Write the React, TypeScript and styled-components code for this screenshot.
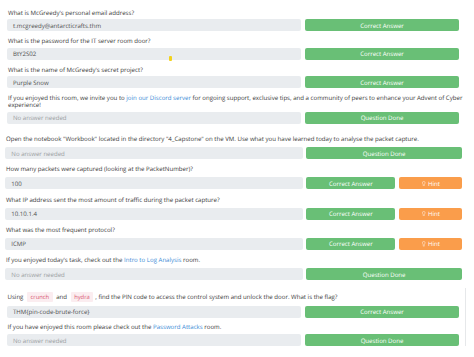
import React from 'react';
import styled, { createGlobalStyle } from 'styled-components';
import { Lightbulb } from 'lucide-react';

const Global = createGlobalStyle`
  html, body { margin: 0; padding: 0; background: #ffffff; }
  body {
    width: 474px;
    height: 357px;
    overflow: hidden;
    font-family: "Open Sans", "Liberation Sans", sans-serif;
    text-rendering: geometricPrecision;
  }
`;

const Page = styled.main`
  display: flex;
  flex-direction: column;
`;

const Section = styled.section<{ $top: number; $left: number; $width: number; $gap: number; $padTop?: number; $bordered?: boolean }>`
  display: flex;
  flex-direction: column;
  gap: ${p => p.$gap}px;
  margin-top: ${p => p.$top}px;
  padding-left: ${p => p.$left}px;
  padding-top: ${p => p.$padTop ?? 0}px;
  width: ${p => p.$width}px;
  ${p => p.$bordered ? 'padding-right: 6px; border-right: 1px solid #e6e8ea;' : ''}
`;

const Question = styled.div<{ $labelGap: number }>`
  display: flex;
  flex-direction: column;
  gap: ${p => p.$labelGap}px;
`;

const Label = styled.div<{ $indent: number }>`
  padding-left: ${p => p.$indent}px;
  font-size: 6.1px;
  line-height: 7px;
  color: #3a3a3a;
  white-space: nowrap;
`;

const Link = styled.span`
  color: #3a8bd6;
`;

const Code = styled.span`
  background: #fbedf0;
  color: #d8546f;
  padding: 1px 3.5px;
  border-radius: 1px;
  margin: 0 2px;
  font-size: 5.8px;
`;

const Row = styled.div<{ $gap: number }>`
  display: flex;
  gap: ${p => p.$gap}px;
  height: 12px;
`;

const AnswerBox = styled.div<{ $muted?: boolean }>`
  position: relative;
  flex: 1;
  display: flex;
  align-items: center;
  padding-left: 6px;
  background: #e9ecef;
  border-radius: 2px;
  font-size: 6.1px;
  color: ${p => (p.$muted ? '#9b9ea2' : '#505050')};
`;

const Caret = styled.span`
  position: absolute;
  left: 162px;
  top: 8px;
  width: 2.5px;
  height: 5px;
  background: #f2d21c;
  border-radius: 1px;
`;

const Actions = styled.div<{ $w: number; $gap: number }>`
  width: ${p => p.$w}px;
  display: flex;
  gap: ${p => p.$gap}px;
`;

const Button = styled.div<{ $tone: 'green' | 'orange'; $w?: number }>`
  ${p => (p.$w ? `width: ${p.$w}px;` : 'flex: 1;')}
  display: flex;
  align-items: center;
  justify-content: center;
  gap: 1px;
  background: ${p => (p.$tone === 'green' ? '#69bf76' : '#fa9d4b')};
  color: #ffffff;
  font-size: 6.1px;
  font-weight: 500;
  border-radius: 2px;
`;

type Item = {
  label: React.ReactNode;
  answer: string;
  muted?: boolean;
  action: 'correct' | 'done' | 'correct-hint';
  caret?: boolean;
};

const sectionA: Item[] = [
  { label: "What is McGreedy's personal email address?", answer: 't.mcgreedy@antarcticrafts.thm', action: 'correct' },
  { label: 'What is the password for the IT server room door?', answer: 'BtY2S02', action: 'correct', caret: true },
  { label: "What is the name of McGreedy's secret project?", answer: 'Purple Snow', action: 'correct' },
  {
    label: (
      <>
        If you enjoyed this room, we invite you to <Link>join our Discord server</Link> for ongoing support, exclusive tips, and a community of peers to enhance your Advent of Cyber
        <br />
        experience!
      </>
    ),
    answer: 'No answer needed',
    muted: true,
    action: 'done',
  },
];

const sectionB: Item[] = [
  {
    label: 'Open the notebook "Workbook" located in the directory "4_Capstone" on the VM. Use what you have learned today to analyse the packet capture.',
    answer: 'No answer needed',
    muted: true,
    action: 'done',
  },
  { label: 'How many packets were captured (looking at the PacketNumber)?', answer: '100', action: 'correct-hint' },
  { label: 'What IP address sent the most amount of traffic during the packet capture?', answer: '10.10.1.4', action: 'correct-hint' },
  { label: 'What was the most frequent protocol?', answer: 'ICMP', action: 'correct-hint' },
  {
    label: (
      <>
        If you enjoyed today's task, check out the <Link>Intro to Log Analysis</Link> room.
      </>
    ),
    answer: 'No answer needed',
    muted: true,
    action: 'done',
  },
];

const sectionC: Item[] = [
  {
    label: (
      <>
        Using <Code>crunch</Code> and <Code>hydra</Code>, find the PIN code to access the control system and unlock the door. What is the flag?
      </>
    ),
    answer: 'THM{pin-code-brute-force}',
    action: 'correct',
  },
  {
    label: (
      <>
        If you have enjoyed this room please check out the <Link>Password Attacks</Link> room.
      </>
    ),
    answer: 'No answer needed',
    muted: true,
    action: 'done',
  },
];

type Geometry = { actionsW: number; rowGap: number; correctW: number; labelGap: number; indent: number };

const QuestionBlock: React.FC<{ item: Item; g: Geometry }> = ({ item, g }) => (
  <Question $labelGap={g.labelGap}>
    <Label $indent={g.indent}>{item.label}</Label>
    <Row $gap={g.rowGap}>
      <AnswerBox $muted={item.muted}>
        {item.answer}
        {item.caret && <Caret />}
      </AnswerBox>
      <Actions $w={g.actionsW} $gap={4}>
        {item.action === 'done' && <Button $tone="green">Question Done</Button>}
        {item.action === 'correct' && <Button $tone="green">Correct Answer</Button>}
        {item.action === 'correct-hint' && (
          <>
            <Button $tone="green" $w={g.correctW}>Correct Answer</Button>
            <Button $tone="orange">
              <Lightbulb size={5.5} strokeWidth={2} />
              Hint
            </Button>
          </>
        )}
      </Actions>
    </Row>
  </Question>
);

const gA: Geometry = { actionsW: 154, rowGap: 4, correctW: 89, labelGap: 3.5, indent: 1 };
const gB: Geometry = { actionsW: 155.7, rowGap: 3.6, correctW: 89, labelGap: 5, indent: 0.7 };
const gC: Geometry = { actionsW: 154, rowGap: 4, correctW: 89, labelGap: 4.5, indent: 0.5 };

export default function App() {
  return (
    <>
      <Global />
      <Page>
        <Section $top={8.5} $left={7} $width={452} $gap={6}>
          {sectionA.map((it, i) => (
            <QuestionBlock key={i} item={it} g={gA} />
          ))}
        </Section>
        <Section $top={11.5} $left={5.3} $width={456.7} $gap={6.3}>
          {sectionB.map((it, i) => (
            <QuestionBlock key={i} item={it} g={gB} />
          ))}
        </Section>
        <Section $top={7.8} $left={7} $width={452} $gap={5} $padTop={5.5} $bordered>
          {sectionC.map((it, i) => (
            <QuestionBlock key={i} item={it} g={gC} />
          ))}
        </Section>
      </Page>
    </>
  );
}
